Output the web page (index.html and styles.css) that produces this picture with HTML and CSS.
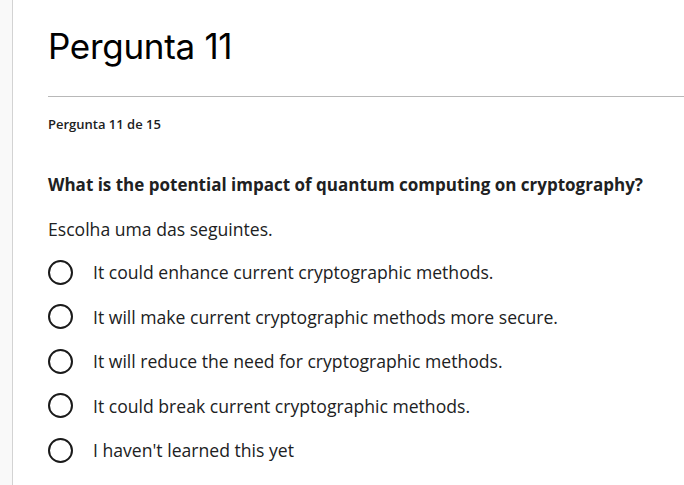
FILE: index.html
```html
<!DOCTYPE html>
<html lang="pt">
<head>
<meta charset="utf-8">
<title>Pergunta 11</title>
<link rel="stylesheet" href="styles.css">
</head>
<body>
<div class="page">
  <div class="rail"></div>
  <main class="content">
    <h1 class="title">Pergunta 11</h1>
    <hr class="divider">
    <div class="counter">Pergunta 11 de 15</div>
    <p class="question">What is the potential impact of quantum computing on cryptography?</p>
    <p class="hint">Escolha uma das seguintes.</p>
    <ul class="options">
      <li class="option"><span class="radio"></span><span>It could enhance current cryptographic methods.</span></li>
      <li class="option"><span class="radio"></span><span>It will make current cryptographic methods more secure.</span></li>
      <li class="option"><span class="radio"></span><span>It will reduce the need for cryptographic methods.</span></li>
      <li class="option"><span class="radio"></span><span>It could break current cryptographic methods.</span></li>
      <li class="option"><span class="radio"></span><span>I haven't learned this yet</span></li>
    </ul>
  </main>
</div>
</body>
</html>
```

FILE: styles.css
```css
* { box-sizing: border-box; }
html, body { margin: 0; padding: 0; background: #fff; }
body {
  font-family: "Open Sans", "Liberation Sans", sans-serif;
  color: #202122;
  width: 684px;
  height: 485px;
  overflow: hidden;
}
.page {
  display: flex;
  min-height: 485px;
}
.rail {
  width: 13px;
  flex: none;
  background: #f9f9f9;
  border-right: 1px solid #d3d3d3;
}
.content {
  flex: 1;
  padding-left: 35px;
}
.title {
  font-family: Inter, "Liberation Sans", sans-serif;
  font-weight: 400;
  font-size: 35px;
  line-height: 40px;
  margin: 26px 0 0;
  color: #000;
  letter-spacing: -0.3px;
}
.divider {
  border: 0;
  border-top: 1px solid #b8b8b8;
  margin: 30px 0 0;
}
.counter {
  font-size: 13px;
  font-weight: 600;
  line-height: 16px;
  margin-top: 19px;
  color: #202122;
}
.question {
  font-size: 17px;
  font-weight: 700;
  line-height: 24px;
  margin: 41px 0 0;
}
.hint {
  font-size: 17.6px;
  line-height: 24px;
  margin: 20px 0 0;
}
.options {
  list-style: none;
  margin: 9px 0 0;
  padding: 0;
}
.option {
  display: flex;
  align-items: center;
  gap: 20px;
  height: 44.5px;
  font-size: 17.6px;
}
.radio {
  width: 25px;
  height: 25px;
  border: 2px solid #1a1a1a;
  border-radius: 50%;
  flex: none;
}
```
